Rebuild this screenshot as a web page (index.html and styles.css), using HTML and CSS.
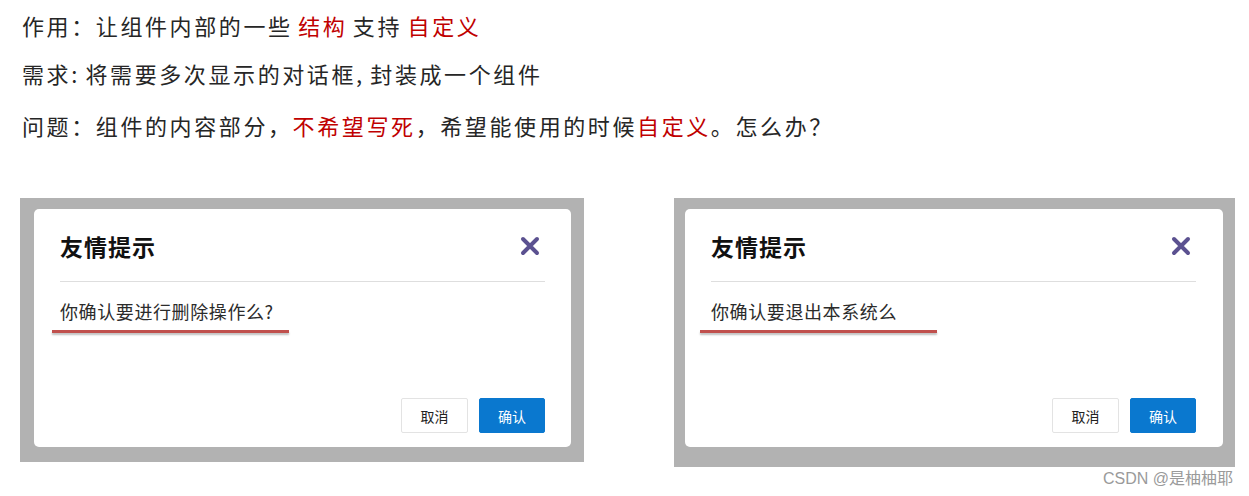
FILE: index.html
```html
<!DOCTYPE html>
<html lang="zh">
<head>
<meta charset="utf-8">
<link rel="stylesheet" href="styles.css">
</head>
<body>
<div class="page">
  <div class="notes">
    <p class="note note-tight">作用：让组件内部的一些 <span class="hl">结构</span> 支持 <span class="hl">自定义</span></p>
    <p class="note note-2 note-tight">需求: 将需要多次显示的对话框, 封装成一个组件</p>
    <p class="note">问题：组件的内容部分，<span class="hl">不希望写死</span>，希望能使用的时候<span class="hl">自定义</span>。怎么办？</p>
  </div>
  <div class="shots">
    <div class="shot shot-left">
      <div class="dialog">
        <div class="dialog-head">
          <span class="dialog-title">友情提示</span>
          <svg class="close" viewBox="0 0 20 20" width="20" height="20"><path d="M3 3 L17 17 M17 3 L3 17" stroke="#5b5190" stroke-width="4" stroke-linecap="round"/></svg>
        </div>
        <div class="dialog-body">
          <p class="msg">你确认要进行删除操作么?</p>
          <div class="mark mark-left"></div>
        </div>
        <div class="dialog-foot">
          <button class="btn btn-cancel">取消</button>
          <button class="btn btn-ok">确认</button>
        </div>
      </div>
    </div>
    <div class="col-right">
      <div class="shot shot-right">
        <div class="dialog">
          <div class="dialog-head">
            <span class="dialog-title">友情提示</span>
            <svg class="close" viewBox="0 0 20 20" width="20" height="20"><path d="M3 3 L17 17 M17 3 L3 17" stroke="#5b5190" stroke-width="4" stroke-linecap="round"/></svg>
          </div>
          <div class="dialog-body">
            <p class="msg">你确认要退出本系统么</p>
            <div class="mark mark-right"></div>
          </div>
          <div class="dialog-foot">
            <button class="btn btn-cancel">取消</button>
            <button class="btn btn-ok">确认</button>
          </div>
        </div>
      </div>
      <div class="watermark">CSDN @是柚柚耶</div>
    </div>
  </div>
</div>
</body>
</html>
```
FILE: styles.css
```css
html, body {
  margin: 0;
  padding: 0;
  background: #ffffff;
}
body {
  font-family: "Noto Sans CJK SC", "Noto Sans", sans-serif;
  width: 1249px;
  height: 496px;
  overflow: hidden;
}
.page {
  padding: 0;
}
.notes {
  padding-left: 22px;
}
.note {
  margin: 0;
  font-size: 22px;
  letter-spacing: 2.6px;
  line-height: 50px;
  height: 50px;
  color: #262626;
}
.note-tight {
  word-spacing: -2px;
}
.note-2 {
  margin-top: -2px;
  margin-bottom: 2px;
}
.hl {
  color: #c00000;
}
.shots {
  display: flex;
  margin-top: 48px;
  padding-left: 20px;
  gap: 90px;
}
.shot {
  background: #b2b2b2;
  box-sizing: border-box;
  display: flex;
}
.shot-left {
  width: 564px;
  height: 264px;
  padding: 11px 13px 15px 14px;
}
.col-right {
  display: flex;
  flex-direction: column;
}
.shot-right {
  width: 561px;
  height: 269px;
  padding: 11px 12px 20px 11px;
}
.dialog {
  flex: 1;
  background: #ffffff;
  border-radius: 5px;
  padding: 0 26px 14px 26px;
  display: flex;
  flex-direction: column;
}
.shot-right .dialog {
  padding-right: 27px;
}
.dialog-head {
  height: 72px;
  border-bottom: 1px solid #dedede;
  display: flex;
  align-items: center;
  justify-content: space-between;
}
.dialog-title {
  font-size: 23px;
  font-weight: 700;
  color: #111111;
  letter-spacing: 1px;
  padding-top: 1px;
}
.close {
  margin-right: 5px;
  margin-top: 1px;
}
.dialog-body {
  padding-top: 16px;
}
.msg {
  margin: 0;
  font-size: 18px;
  letter-spacing: 0.6px;
  line-height: 26px;
  color: #2b2b2b;
}
.mark {
  height: 3px;
  width: 237px;
  margin-top: 6px;
  background: #c0504d;
  box-shadow: 0 2px 2px rgba(0, 0, 0, 0.25);
}
.mark-left {
  margin-left: -8px;
}
.mark-right {
  margin-left: -11px;
}
.dialog-foot {
  margin-top: auto;
  display: flex;
  justify-content: flex-end;
  gap: 11px;
}
.btn {
  font-family: "Noto Sans CJK SC", sans-serif;
  font-size: 14px;
  height: 35px;
  width: 67px;
  border-radius: 2px;
  padding: 0;
  box-sizing: border-box;
}
.btn-cancel {
  background: #ffffff;
  border: 1px solid #e3e3e3;
  color: #222222;
}
.btn-ok {
  background: #0a78cf;
  border: 1px solid #0a78cf;
  color: #ffffff;
  width: 66px;
}
.watermark {
  text-align: right;
  padding-right: 2px;
  margin-top: 2px;
  font-family: "Liberation Sans", "Noto Sans CJK SC", sans-serif;
  font-size: 16px;
  line-height: 20px;
  color: #9a9a9a;
}
```
